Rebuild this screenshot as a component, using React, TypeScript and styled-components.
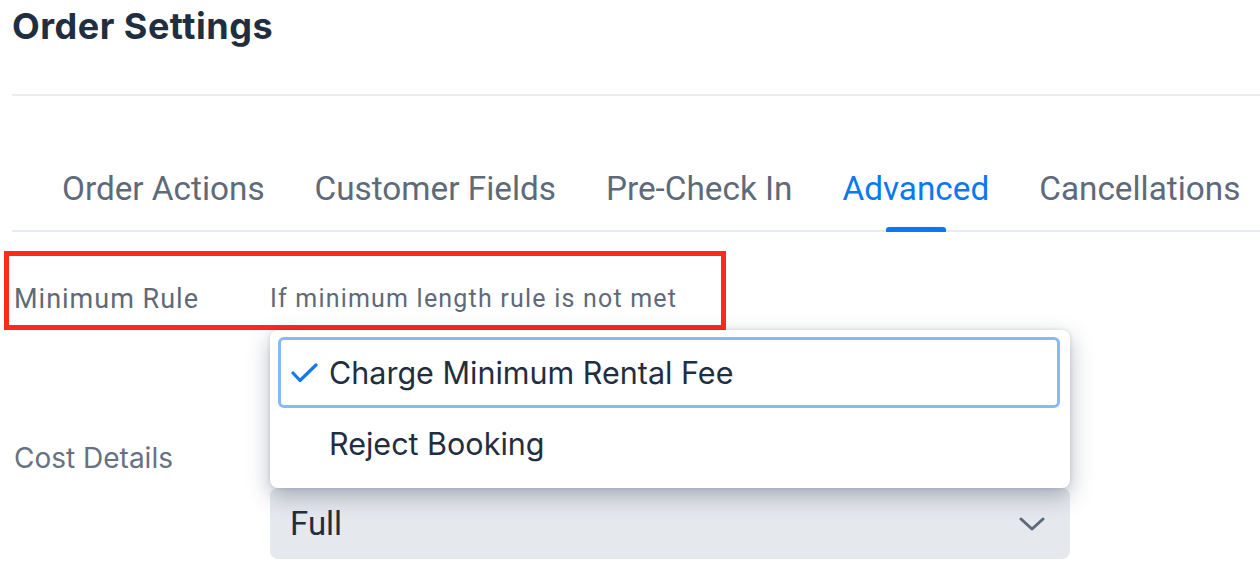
import * as React from 'react';
import styled, { createGlobalStyle } from 'styled-components';

const GlobalStyle = createGlobalStyle`
  html, body {
    margin: 0;
    padding: 0;
    background: #ffffff;
    overflow: hidden;
  }
  body {
    font-family: Roboto, 'Liberation Sans', sans-serif;
  }
`;

const tabs = [
  'Order Actions',
  'Customer Fields',
  'Pre-Check In',
  'Advanced',
  'Cancellations',
];

const options = ['Charge Minimum Rental Fee', 'Reject Booking'];

const App: React.FC = () => {
  const active = 'Advanced';
  const selected = 'Charge Minimum Rental Fee';

  return (
    <>
      <GlobalStyle />
      <Page>
        <Title>Order Settings</Title>
        <Divider />

        <TabList>
          {tabs.map((tab) => (
            <Tab key={tab} active={tab === active}>
              {tab}
            </Tab>
          ))}
        </TabList>

        <Form>
          <HighlightRow>
            <FieldLabel>Minimum Rule</FieldLabel>
            <Hint>If minimum length rule is not met</Hint>
          </HighlightRow>

          {/* the open select: its menu covers the trigger */}
          <ControlRow>
            <Menu>
              {options.map((option) => (
                <MenuItem key={option} selected={option === selected}>
                  <CheckSlot>{option === selected && <Check />}</CheckSlot>
                  {option}
                </MenuItem>
              ))}
            </Menu>
          </ControlRow>

          <FieldRow>
            <CostLabel>Cost Details</CostLabel>
            <Controls>
              <Select>
                <SelectValue>Full</SelectValue>
                <Chevron />
              </Select>
            </Controls>
          </FieldRow>
        </Form>
      </Page>
    </>
  );
};

const Check: React.FC = () => (
  <svg width="27" height="20" viewBox="0 0 27 20" fill="none">
    <polyline
      points="2,10 9,17.5 25,2"
      stroke="#1677ee"
      strokeWidth="3.2"
      strokeLinecap="round"
      strokeLinejoin="round"
    />
  </svg>
);

const Chevron: React.FC = () => (
  <svg width="26" height="16" viewBox="0 0 26 16" fill="none">
    <polyline
      points="2,3 13,13 24,3"
      stroke="#5d6978"
      strokeWidth="3"
      strokeLinecap="round"
      strokeLinejoin="round"
    />
  </svg>
);

const Page = styled.div`
  width: 1260px;
  height: 576px;
  padding-left: 12px;
  box-sizing: border-box;
  overflow: hidden;
`;

const Title = styled.h1`
  margin: 0;
  padding-top: 4px;
  height: 52px;
  font-family: Inter, 'Liberation Sans', sans-serif;
  font-weight: 700;
  font-size: 36px;
  line-height: 44px;
  color: #1f2e40;
  letter-spacing: 0.5px;
`;

const Divider = styled.div`
  height: 2px;
  margin-top: 38px;
  background: #ececec;
`;

const TabList = styled.div`
  display: flex;
  margin-top: 56px;
  padding-left: 25px;
  border-bottom: 2px solid #e6ebf0;
`;

const Tab = styled.div<{ active?: boolean }>`
  position: relative;
  padding: 0 25px;
  height: 78px;
  line-height: 74px;
  font-size: 33.3px;
  white-space: nowrap;
  color: ${({ active }) => (active ? '#0a78ef' : '#5e6a79')};

  &::after {
    content: '';
    display: ${({ active }) => (active ? 'block' : 'none')};
    position: absolute;
    left: 50%;
    bottom: -2px;
    width: 60px;
    height: 5px;
    margin-left: -30px;
    border-radius: 3px 3px 0 0;
    background: #0a78ef;
  }
`;

const Form = styled.div`
  display: flex;
  flex-direction: column;
  padding-top: 19px;
`;

const HighlightRow = styled.div`
  display: flex;
  align-items: center;
  width: 722px;
  height: 79px;
  margin-left: -8px;
  padding: 16px 0 0 5px;
  border: 5px solid #ff2a17;
  box-sizing: border-box;
`;

const FieldLabel = styled.div`
  width: 256px;
  font-size: 27px;
  letter-spacing: 1px;
  color: #5e6a79;
`;

const Hint = styled.div`
  font-size: 25px;
  letter-spacing: 1.2px;
  color: #5e6a79;
`;

const ControlRow = styled.div`
  position: relative;
  height: 90px;
  margin-left: 258px;
  width: 800px;
`;

const FieldRow = styled.div`
  display: flex;
  align-items: flex-start;
`;

const CostLabel = styled.div`
  width: 256px;
  padding: 21px 0 0 2px;
  font-family: Inter, 'Liberation Sans', sans-serif;
  font-size: 28px;
  line-height: 34px;
  color: #667283;
`;

const Controls = styled.div`
  display: flex;
  flex-direction: column;
  gap: 10px;
  width: 800px;
  padding-top: 68px;
`;

const Select = styled.div`
  display: flex;
  align-items: center;
  justify-content: space-between;
  height: 71px;
  padding: 0 25px 0 20px;
  border-radius: 8px;
  background: #e5e8ed;
  box-sizing: border-box;
`;

const SelectValue = styled.span`
  font-size: 33px;
  color: #1f2e40;
`;

const Menu = styled.div`
  position: absolute;
  top: 0;
  left: 0;
  z-index: 2;
  width: 800px;
  height: 158px;
  padding: 7px 10px 0 8px;
  border-radius: 8px;
  background: #ffffff;
  box-sizing: border-box;
  box-shadow:
    0 0 4px rgba(40, 50, 70, 0.14),
    0 8px 22px rgba(40, 55, 80, 0.34);
`;

const MenuItem = styled.div<{ selected?: boolean }>`
  display: flex;
  align-items: center;
  height: 71px;
  padding-left: 10px;
  border: 3px solid ${({ selected }) => (selected ? '#86baf6' : 'transparent')};
  border-radius: 6px;
  box-sizing: border-box;
  font-family: Inter, 'Liberation Sans', sans-serif;
  font-size: 30.5px;
  color: #1f2e40;
`;

const CheckSlot = styled.span`
  display: flex;
  align-items: center;
  width: 38px;
`;

export default App;
